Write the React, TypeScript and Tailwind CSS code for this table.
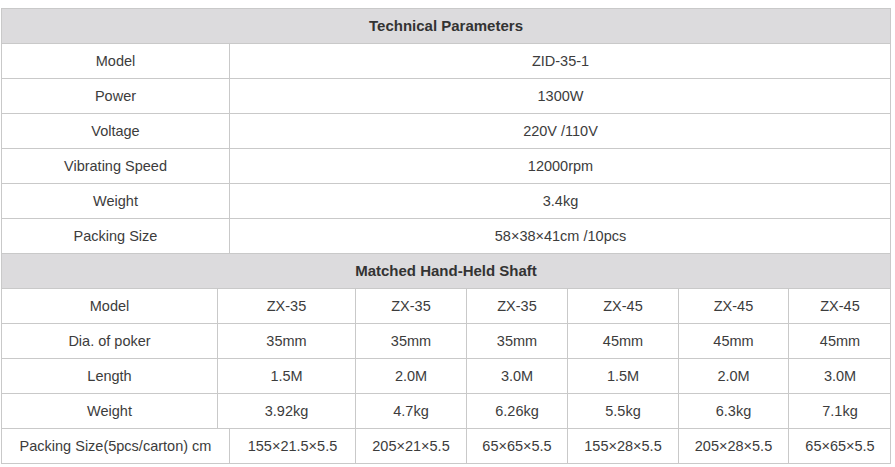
import React from "react";

const font = { fontFamily: '"Liberation Sans", Arial, sans-serif' };

function Cell({ w, children, last }: { w: string; children?: React.ReactNode; last?: boolean }) {
  return (
    <div className={`${w} flex-none flex items-center justify-center pt-[2px] ${last ? "" : "border-r border-[#c9c9c9]"}`}>
      {children}
    </div>
  );
}

const topRows: [string, string][] = [
  ["Model", "ZID-35-1"],
  ["Power", "1300W"],
  ["Voltage", "220V /110V"],
  ["Vibrating Speed", "12000rpm"],
  ["Weight", "3.4kg"],
  ["Packing Size", "58×38×41cm /10pcs"],
];

const lowerRows: [string, string[]][] = [
  ["Model", ["ZX-35", "ZX-35", "ZX-35", "ZX-45", "ZX-45", "ZX-45"]],
  ["Dia. of poker", ["35mm", "35mm", "35mm", "45mm", "45mm", "45mm"]],
  ["Length", ["1.5M", "2.0M", "3.0M", "1.5M", "2.0M", "3.0M"]],
  ["Weight", ["3.92kg", "4.7kg", "6.26kg", "5.5kg", "6.3kg", "7.1kg"]],
];

const colW = ["w-[138px]", "w-[111px]", "w-[101px]", "w-[111px]", "w-[110px]", "w-[102px]"];
const lastW = ["w-[126px]", "w-[111px]", "w-[101px]", "w-[111px]", "w-[110px]", "w-[102px]"];
const packing = ["155×21.5×5.5", "205×21×5.5", "65×65×5.5", "155×28×5.5", "205×28×5.5", "65×65×5.5"];

export default function App() {
  return (
    <div className="w-[895px] h-[467px] bg-white pt-[8px] pl-[1px]" style={font}>
      <div className="w-[890px] border-t border-l border-r border-[#c9c9c9] text-[14.5px] text-[#3c3c3c]">
        <div className="h-[35px] border-b border-[#c9c9c9] bg-[#dcdbdd] flex items-center justify-center pt-[1px] font-bold text-[15px] text-[#333]">
          Technical Parameters
        </div>
        {topRows.map(([k, v]) => (
          <div key={k} className="h-[35px] border-b border-[#c9c9c9] flex">
            <Cell w="w-[228px]">{k}</Cell>
            <Cell w="w-[661px]" last>{v}</Cell>
          </div>
        ))}
        <div className="h-[35px] border-b border-[#c9c9c9] bg-[#dcdbdd] flex items-center justify-center pt-[1px] font-bold text-[15px] text-[#333]">
          Matched Hand-Held Shaft
        </div>
        {lowerRows.map(([k, vals]) => (
          <div key={k} className="h-[35px] border-b border-[#c9c9c9] flex">
            <Cell w="w-[216px]">{k}</Cell>
            {vals.map((v, i) => (
              <Cell key={i} w={colW[i]} last={i === 5}>{v}</Cell>
            ))}
          </div>
        ))}
        <div className="h-[35px] border-b border-[#c9c9c9] flex">
          <Cell w="w-[228px]">Packing Size(5pcs/carton) cm</Cell>
          {packing.map((v, i) => (
            <Cell key={i} w={lastW[i]} last={i === 5}>{v}</Cell>
          ))}
        </div>
      </div>
    </div>
  );
}
